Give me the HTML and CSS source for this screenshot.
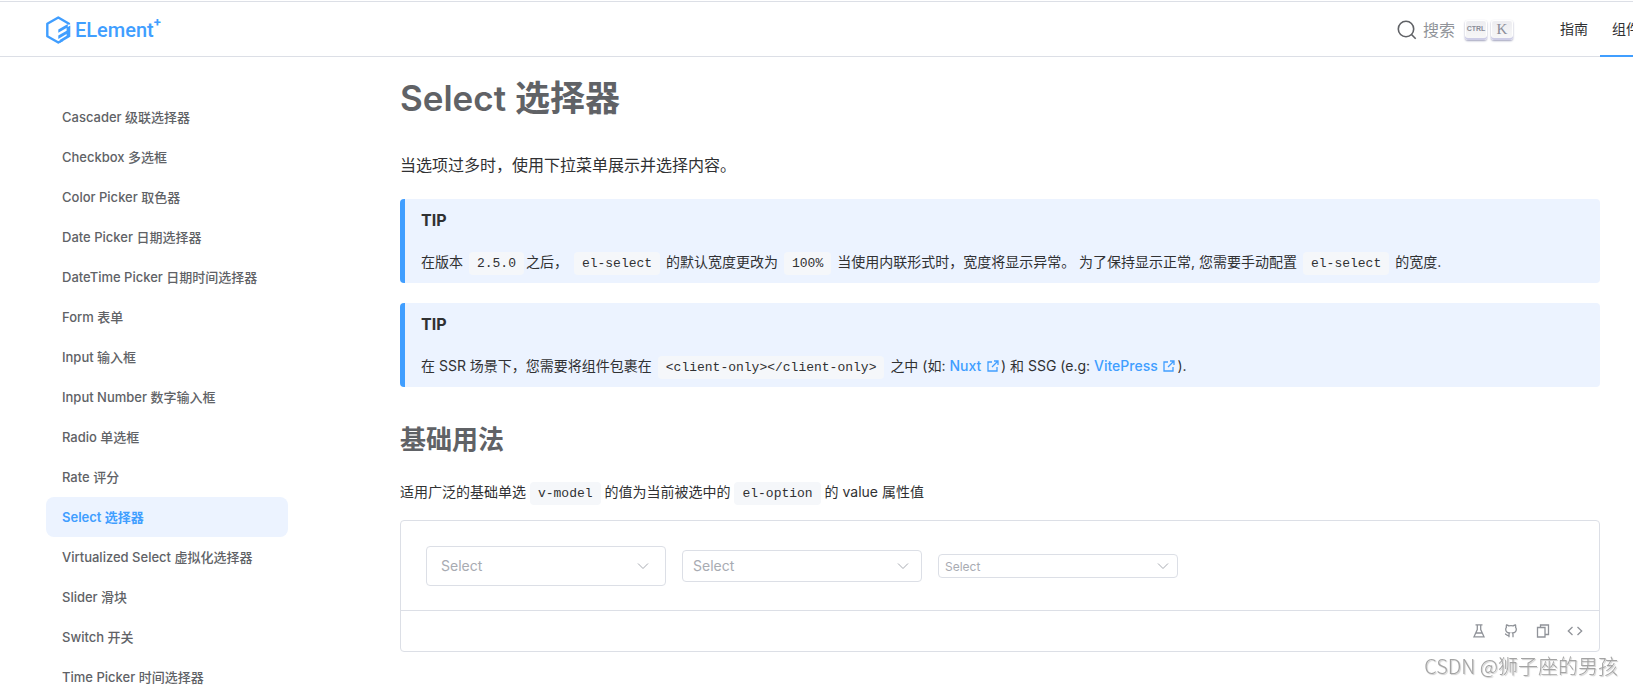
FILE: index.html
```html
<!DOCTYPE html>
<html lang="zh-CN">
<head>
<meta charset="utf-8">
<title>Select 选择器 | Element Plus</title>
<link rel="stylesheet" href="styles.css">
</head>
<body>
<header class="navbar">
  <a class="logo" href="#" aria-label="Element Plus">
    <svg class="logo-mark" viewBox="0 0 25 28" aria-hidden="true">
      <path d="M23 8.6V7.7L12.3 1.5 1.3 7.8v12.4l11 6.3 4.4-2.5" fill="none" stroke="currentColor" stroke-width="2.4" stroke-linejoin="round"/>
      <path d="M12.3 13.6 21.8 8v3.2L12.3 16.8zM12.3 19.6 20.6 14.7V11.8L24.3 9.6V20.8L14 26.8V23.7L20.6 19.8V18L12.3 22.9z" fill="currentColor"/>
    </svg>
    <span class="logo-name">ELement</span><sup class="logo-plus">+</sup>
  </a>
  <button class="search" type="button">
    <svg class="search-icon" viewBox="0 0 20 20" aria-hidden="true"><circle cx="9" cy="9" r="7.7"/><path d="m14.500 14.500 4.200 4.200"/></svg>
    <span class="search-text">搜索</span>
    <kbd class="key key-ctrl">CTRL</kbd>
    <kbd class="key">K</kbd>
  </button>
  <nav class="menu">
    <a class="menu-link" href="#">指南</a>
    <a class="menu-link active" href="#">组件</a>
  </nav>
</header>

<div class="page">
  <aside class="sidebar">
    <a class="side-link" href="#">Cascader 级联选择器</a>
    <a class="side-link" href="#">Checkbox 多选框</a>
    <a class="side-link" href="#">Color Picker 取色器</a>
    <a class="side-link" href="#">Date Picker 日期选择器</a>
    <a class="side-link" href="#">DateTime Picker 日期时间选择器</a>
    <a class="side-link" href="#">Form 表单</a>
    <a class="side-link" href="#">Input 输入框</a>
    <a class="side-link" href="#">Input Number 数字输入框</a>
    <a class="side-link" href="#">Radio 单选框</a>
    <a class="side-link" href="#">Rate 评分</a>
    <a class="side-link active" href="#">Select 选择器</a>
    <a class="side-link" href="#">Virtualized Select 虚拟化选择器</a>
    <a class="side-link" href="#">Slider 滑块</a>
    <a class="side-link" href="#">Switch 开关</a>
    <a class="side-link" href="#">Time Picker 时间选择器</a>
  </aside>

  <main class="content">
    <h1 class="title">Select 选择器</h1>
    <p class="lead">当选项过多时，使用下拉菜单展示并选择内容。</p>

    <section class="tip">
      <p class="tip-title">TIP</p>
      <p class="tip-text">在版本 <code class="code">2.5.0</code>之后， <code class="code">el-select</code> 的默认宽度更改为 <code class="code">100%</code> 当使用内联形式时，宽度将显示异常。 为了保持显示正常, 您需要手动配置 <code class="code">el-select</code> 的宽度.</p>
    </section>
    <section class="tip">
      <p class="tip-title">TIP</p>
      <p class="tip-text">在 SSR 场景下，您需要将组件包裹在 <code class="code">&lt;client-only&gt;&lt;/client-only&gt;</code> 之中 (如: <a class="link" href="#">Nuxt <svg class="link-icon" viewBox="0 0 12 12" aria-hidden="true"><path d="M5 2H1v9h9V7M7 1h4v4M11 1 5 7"/></svg></a>) 和 SSG (e.g: <a class="link" href="#">VitePress <svg class="link-icon" viewBox="0 0 12 12" aria-hidden="true"><path d="M5 2H1v9h9V7M7 1h4v4M11 1 5 7"/></svg></a>).</p>
    </section>

    <h2 class="subtitle">基础用法</h2>
    <p class="text">适用广泛的基础单选 <code class="code">v-model</code> 的值为当前被选中的 <code class="code">el-option</code> 的 value 属性值</p>

    <section class="demo">
      <div class="demo-body">
        <div class="select large">
          <select class="select-box" aria-label="Large select"><option>Select</option></select>
          <svg class="chevron" viewBox="0 0 14 14" aria-hidden="true"><path d="m2 4.500 5 5 5-5"/></svg>
        </div>
        <div class="select">
          <select class="select-box" aria-label="Default select"><option>Select</option></select>
          <svg class="chevron" viewBox="0 0 14 14" aria-hidden="true"><path d="m2 4.500 5 5 5-5"/></svg>
        </div>
        <div class="select small">
          <select class="select-box" aria-label="Small select"><option>Select</option></select>
          <svg class="chevron" viewBox="0 0 14 14" aria-hidden="true"><path d="m2 4.500 5 5 5-5"/></svg>
        </div>
      </div>
      <div class="demo-tools">
        <button class="tool" type="button" aria-label="Playground">
          <svg viewBox="0 0 16 16"><path d="M4.500 1.800h7M6.300 2v4.500L3 13.800h10L9.700 6.500V2M4.800 10h6.400"/></svg>
        </button>
        <button class="tool" type="button" aria-label="GitHub">
          <svg viewBox="0 0 16 16"><path d="M6 14.300V11.500C6 10.800 6.200 10.300 6.500 10 4.300 9.800 2.700 9 2.700 6.300c0-.8.2-1.400.7-2-.2-.8-.1-1.600.1-2.300 1 .1 1.700.5 2.300.9 1.400-.4 3-.4 4.400 0 .6-.4 1.300-.8 2.300-.9.2.7.3 1.500.1 2.300.5.6.7 1.200.7 2 0 2.700-1.600 3.500-3.800 3.700.3.3.5.8.5 1.500v2.800M6 12.600c-2.400.5-2.600-1.600-4-1.800"/></svg>
        </button>
        <button class="tool" type="button" aria-label="Copy code">
          <svg viewBox="0 0 16 16"><path d="M2.500 4.500h7.500v9.500H2.500zM5.500 4.500V2h8v9.500H10"/></svg>
        </button>
        <button class="tool" type="button" aria-label="View source">
          <svg viewBox="0 0 16 16"><path d="M5.500 4 1.300 8l4.200 4M10.500 4l4.200 4-4.200 4"/></svg>
        </button>
      </div>
    </section>
  </main>
</div>
<div class="watermark">CSDN @狮子座的男孩</div>
</body>
</html>
```
FILE: styles.css
```css
* {
  box-sizing: border-box;
}

body {
  height: 100vh;
  margin: 0;
  overflow: hidden;
  background: #fff;
  color: #303133;
  font-family: Inter, "Noto Sans CJK SC", sans-serif;
  font-size: 14px;
  line-height: 24px;
}

h1, h2, p {
  margin: 0;
}

a {
  color: inherit;
  text-decoration: none;
}

button {
  padding: 0;
  border: 0;
  background: none;
  font: inherit;
}

.navbar {
  display: flex;
  height: 56px;
  margin: 1px -19px 0 0;
  padding-left: 46px;
  border: solid #dcdfe6;
  border-width: 1px 0;
  white-space: nowrap;
}

.logo {
  display: flex;
  align-items: center;
  margin-right: auto;
  padding-top: 2px;
  color: #409eff;
}

.logo-mark {
  width: 25px;
  height: 28px;
  margin-right: 4px;
}

.logo-name {
  font-family: Roboto, sans-serif;
  font-size: 20px;
  font-weight: 500;
}

.logo-plus {
  align-self: flex-start;
  margin-top: 9px;
  font-family: Roboto, sans-serif;
  font-size: 13px;
  font-weight: 700;
  line-height: 20px;
}

.search {
  display: flex;
  align-items: center;
  margin-right: 31px;
  padding-top: 2px;
}

.search-icon {
  width: 20px;
  height: 20px;
  margin-right: 6px;
  fill: none;
  stroke: #606266;
  stroke-width: 1.6;
}

.search-text {
  margin-right: 10px;
  color: #909399;
  font-size: 16px;
}

.key {
  width: 22px;
  height: 20px;
  margin-right: 4px;
  border-radius: 3px;
  background: linear-gradient(#ececf0, #f8f8f8);
  box-shadow: inset 0 -2px #cdcde6, inset 0 0 1px 1px #fff, 0 1px 2px 0 #a0a2bc;
  color: #8a8d98;
  font-family: "Liberation Serif", serif;
  font-size: 15px;
  line-height: 18px;
  text-align: center;
}

.key-ctrl {
  font-family: "Liberation Sans", sans-serif;
  font-size: 7px;
  font-weight: 700;
}

.menu {
  display: flex;
}

.menu-link {
  margin-bottom: -1px;
  padding: 0 12px;
  border-bottom: 2px solid transparent;
  line-height: 54px;
}

.menu-link.active {
  border-color: #409eff;
}

.page {
  display: flex;
}

.sidebar {
  flex: 0 0 400px;
  padding: 40px 112px 0 46px;
}

.side-link {
  display: block;
  padding: 0 16px;
  border-radius: 8px;
  color: #606266;
  font-size: 13px;
  font-weight: 500;
  line-height: 40px;
  white-space: nowrap;
}

.side-link.active {
  background: #ecf3ff;
  color: #409eff;
  font-weight: 600;
}

.content {
  flex: 1;
  min-width: 0;
  padding: 16px 33px 0 0;
}

.title {
  margin-bottom: 30px;
  color: #606266;
  font-size: 35px;
  font-weight: 600;
  line-height: 50px;
}

.lead {
  margin-bottom: 22px;
  font-size: 16px;
}

.tip {
  margin-bottom: 20px;
  padding: 9px 16px;
  border-left: 5px solid #409eff;
  border-radius: 4px;
  background: #ecf3ff;
}

.tip-title {
  margin-bottom: 18px;
  font-size: 16px;
  font-weight: 700;
}

.code {
  padding: 4px 8px;
  border-radius: 4px;
  background: #f5f7fa;
  font-family: "Liberation Mono", monospace;
  font-size: 13px;
  line-height: 16px;
}

.tip .code {
  margin: 0 2px;
}

.link {
  color: #409eff;
  font-weight: 500;
}

.link-icon {
  width: 12px;
  height: 12px;
  margin: 0 2px;
  vertical-align: -1px;
  fill: none;
  stroke: currentColor;
  stroke-width: 1.3;
}

.subtitle {
  margin: 35px 0 22px;
  color: #606266;
  font-size: 26px;
  font-weight: 700;
  line-height: 36px;
}

.text {
  margin-bottom: 16px;
}

.demo {
  border: 1px solid #dcdfe6;
  border-radius: 4px;
}

.demo-body {
  display: flex;
  align-items: center;
  gap: 16px;
  padding: 25px 25px 24px;
}

.select {
  display: grid;
  align-items: center;
  width: 240px;
}

.select-box {
  grid-area: 1 / 1;
  height: 32px;
  padding: 0 10px;
  border: 1px solid #dcdfe6;
  border-radius: 4px;
  appearance: none;
  background: #fff;
  color: #a8abb2;
  font: inherit;
}

.chevron {
  grid-area: 1 / 1;
  justify-self: end;
  width: 14px;
  height: 14px;
  margin-right: 12px;
  fill: none;
  stroke: #a8abb2;
  pointer-events: none;
}

.large .select-box {
  height: 40px;
  padding: 0 14px;
}

.large .chevron {
  margin-right: 16px;
}

.small .select-box {
  height: 24px;
  padding: 0 6px;
  font-size: 12px;
}

.small .chevron {
  margin-right: 8px;
}

.demo-tools {
  display: flex;
  align-items: center;
  justify-content: flex-end;
  gap: 16px;
  height: 41px;
  padding: 0 16px;
  border-top: 1px solid #dcdfe6;
}

.tool {
  width: 16px;
  height: 16px;
}

.tool svg {
  display: block;
  fill: none;
  stroke: #909399;
  stroke-width: 1.3;
}

.watermark {
  position: fixed;
  right: 15px;
  bottom: 7px;
  color: #a3a3a3;
  font-family: "Noto Sans CJK SC", sans-serif;
  font-size: 20px;
  font-weight: 300;
  text-shadow: 1px 1px 1px #ccc;
}
```
